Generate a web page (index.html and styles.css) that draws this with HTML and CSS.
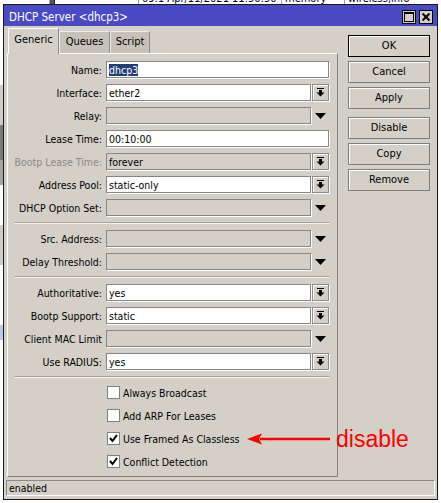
FILE: index.html
```html
<!DOCTYPE html>
<html lang="en">
<head>
  <meta charset="UTF-8" />
  <title>DHCP Server &lt;dhcp3&gt;</title>
  <link rel="stylesheet" href="styles.css">
</head>
<body>
  <div class="desktop">
    <!-- window behind, only its edges show -->
    <div class="bg-log">
      <div class="bg-cell w50"></div>
      <div class="bg-cell w5 dark"></div>
      <div class="bg-cell w82"></div>
      <div class="bg-cell w143"><span>09:1 Apr/11/2021 11:50:50</span></div>
      <div class="bg-cell w64"><span>memory</span></div>
      <div class="bg-cell wrest"><span>wireless,info</span></div>
    </div>
    <div class="bg-left">
      <div class="band white h80"></div>
      <div class="band light h40"></div>
      <div class="band dark h35"></div>
      <div class="band mid h25"></div>
      <div class="band white h40"></div>
      <div class="band light h40"></div>
      <div class="band white h60"></div>
      <div class="band blue h15"></div>
    </div>

    <div class="window">
      <div class="titlebar">
        <span class="title">DHCP Server &lt;dhcp3&gt;</span>
        <span class="tb-btn">
          <svg width="10" height="10" viewBox="0 0 10 10"><rect x="0.5" y="0.5" width="9" height="9" fill="none" stroke="#000"/><rect x="0" y="0" width="10" height="2" fill="#000"/></svg>
        </span>
        <span class="tb-btn">
          <svg width="10" height="10" viewBox="0 0 10 10"><path d="M1.5 1.5 L8.5 8.5 M8.5 1.5 L1.5 8.5" stroke="#000" stroke-width="2"/></svg>
        </span>
      </div>

      <div class="window-body">
        <div class="tabs-area">
          <div class="tabs">
            <div class="tab active">Generic</div>
            <div class="tab">Queues</div>
            <div class="tab">Script</div>
          </div>
          <div class="panel">
            <div class="row">
              <span class="lbl">Name:</span>
              <div class="field full"><span class="selected">dhcp3</span></div>
            </div>
            <div class="row">
              <span class="lbl">Interface:</span>
              <div class="field">ether2</div>
              <span class="dd-btn"><svg width="9" height="9" viewBox="0 0 9 9"><rect x="1" y="0" width="7" height="1" fill="#000"/><rect x="3" y="2" width="3" height="3" fill="#000"/><path d="M0.5 4.5 H8.5 L4.5 8.5 Z" fill="#000"/></svg></span>
            </div>
            <div class="row">
              <span class="lbl">Relay:</span>
              <div class="field off"></div>
              <span class="dd-arrow"><svg width="11" height="6" viewBox="0 0 11 6"><path d="M0 0 H11 L5.5 6 Z" fill="#000"/></svg></span>
            </div>
            <div class="row">
              <span class="lbl">Lease Time:</span>
              <div class="field full">00:10:00</div>
            </div>
            <div class="row">
              <span class="lbl muted">Bootp Lease Time:</span>
              <div class="field off">forever</div>
              <span class="dd-btn"><svg width="9" height="9" viewBox="0 0 9 9"><rect x="1" y="0" width="7" height="1" fill="#000"/><rect x="3" y="2" width="3" height="3" fill="#000"/><path d="M0.5 4.5 H8.5 L4.5 8.5 Z" fill="#000"/></svg></span>
            </div>
            <div class="row">
              <span class="lbl">Address Pool:</span>
              <div class="field">static-only</div>
              <span class="dd-btn"><svg width="9" height="9" viewBox="0 0 9 9"><rect x="1" y="0" width="7" height="1" fill="#000"/><rect x="3" y="2" width="3" height="3" fill="#000"/><path d="M0.5 4.5 H8.5 L4.5 8.5 Z" fill="#000"/></svg></span>
            </div>
            <div class="row">
              <span class="lbl">DHCP Option Set:</span>
              <div class="field off"></div>
              <span class="dd-arrow"><svg width="11" height="6" viewBox="0 0 11 6"><path d="M0 0 H11 L5.5 6 Z" fill="#000"/></svg></span>
            </div>

            <div class="sep"></div>

            <div class="row">
              <span class="lbl">Src. Address:</span>
              <div class="field off"></div>
              <span class="dd-arrow"><svg width="11" height="6" viewBox="0 0 11 6"><path d="M0 0 H11 L5.5 6 Z" fill="#000"/></svg></span>
            </div>
            <div class="row">
              <span class="lbl">Delay Threshold:</span>
              <div class="field off"></div>
              <span class="dd-arrow"><svg width="11" height="6" viewBox="0 0 11 6"><path d="M0 0 H11 L5.5 6 Z" fill="#000"/></svg></span>
            </div>

            <div class="sep"></div>

            <div class="row">
              <span class="lbl">Authoritative:</span>
              <div class="field">yes</div>
              <span class="dd-btn"><svg width="9" height="9" viewBox="0 0 9 9"><rect x="1" y="0" width="7" height="1" fill="#000"/><rect x="3" y="2" width="3" height="3" fill="#000"/><path d="M0.5 4.5 H8.5 L4.5 8.5 Z" fill="#000"/></svg></span>
            </div>
            <div class="row">
              <span class="lbl">Bootp Support:</span>
              <div class="field">static</div>
              <span class="dd-btn"><svg width="9" height="9" viewBox="0 0 9 9"><rect x="1" y="0" width="7" height="1" fill="#000"/><rect x="3" y="2" width="3" height="3" fill="#000"/><path d="M0.5 4.5 H8.5 L4.5 8.5 Z" fill="#000"/></svg></span>
            </div>
            <div class="row">
              <span class="lbl">Client MAC Limit</span>
              <div class="field off"></div>
              <span class="dd-arrow"><svg width="11" height="6" viewBox="0 0 11 6"><path d="M0 0 H11 L5.5 6 Z" fill="#000"/></svg></span>
            </div>
            <div class="row">
              <span class="lbl">Use RADIUS:</span>
              <div class="field">yes</div>
              <span class="dd-btn"><svg width="9" height="9" viewBox="0 0 9 9"><rect x="1" y="0" width="7" height="1" fill="#000"/><rect x="3" y="2" width="3" height="3" fill="#000"/><path d="M0.5 4.5 H8.5 L4.5 8.5 Z" fill="#000"/></svg></span>
            </div>

            <div class="sep"></div>

            <div class="row check-row">
              <span class="box"></span>
              <span>Always Broadcast</span>
            </div>
            <div class="row check-row">
              <span class="box"></span>
              <span>Add ARP For Leases</span>
            </div>
            <div class="row check-row">
              <span class="box"><svg width="11" height="11" viewBox="0 0 11 11"><path d="M2 5 L4.5 8 L9 2" fill="none" stroke="#000" stroke-width="2"/></svg></span>
              <span>Use Framed As Classless</span>
            </div>
            <div class="row check-row">
              <span class="box"><svg width="11" height="11" viewBox="0 0 11 11"><path d="M2 5 L4.5 8 L9 2" fill="none" stroke="#000" stroke-width="2"/></svg></span>
              <span>Conflict Detection</span>
            </div>
          </div>
        </div>

        <div class="buttons">
          <div class="btn default">OK</div>
          <div class="btn">Cancel</div>
          <div class="btn">Apply</div>
          <div class="btn spaced">Disable</div>
          <div class="btn">Copy</div>
          <div class="btn">Remove</div>
        </div>
      </div>

      <div class="statusbar">enabled</div>
    </div>

    <!-- red annotation drawn over the screenshot -->
    <div class="note">
      <svg class="note-arrow" width="86" height="14" viewBox="0 0 86 14"><path d="M14 7 H84" stroke="#f00" stroke-width="2.5"/><path d="M1 7 L16 1.5 L13 7 L16 12.5 Z" fill="#f00"/></svg>
      <span class="note-text">disable</span>
    </div>
  </div>
</body>
</html>
```
FILE: styles.css
```css
* {
  margin: 0;
  padding: 0;
  box-sizing: border-box;
}

body {
  width: 441px;
  height: 503px;
  overflow: hidden;
  background: #fff;
  font-family: "DejaVu Sans Condensed", "DejaVu Sans", sans-serif;
  font-stretch: condensed;
  font-size: 10.5px;
  color: #000;
}

.desktop {
  position: relative;
  width: 441px;
  height: 503px;
  background: #fff;
}

/* background window */
.bg-log {
  position: absolute;
  left: 0;
  top: 0;
  width: 441px;
  height: 5px;
  display: flex;
  overflow: hidden;
  background: #fff;
}

.bg-cell {
  height: 5px;
  border-right: 1px solid #a0a0a0;
  overflow: hidden;
  font-family: "DejaVu Sans", sans-serif;
  font-size: 11px;
}

.bg-cell span {
  display: block;
  margin-top: -8px;
  padding-left: 3px;
  white-space: nowrap;
}

.bg-cell.dark { background: #555; border-right-color: #222; }
.w50 { width: 50px; }
.w5 { width: 5px; }
.w82 { width: 84px; background: #fff; }
.w143 { width: 143px; }
.w64 { width: 63px; }
.wrest { flex: 1; border-right: none; }

.bg-left {
  position: absolute;
  left: 0;
  top: 5px;
  width: 3px;
  display: flex;
  flex-direction: column;
}

.band { width: 3px; }
.band.white { background: #fff; }
.band.light { background: #cfccc6; }
.band.dark { background: #7a7a7a; }
.band.mid { background: #a8a6a0; }
.band.blue { background: #b8cde8; }
.h15 { height: 15px; }
.h25 { height: 25px; }
.h35 { height: 35px; }
.h40 { height: 40px; }
.h60 { height: 60px; }
.h80 { height: 80px; }

/* dialog window */
.window {
  position: absolute;
  left: 3px;
  top: 4px;
  width: 435px;
  height: 496px;
  border: 1px solid #1a1a1a;
  background: #d4d0c8;
  display: flex;
  flex-direction: column;
}

.titlebar {
  height: 21px;
  background: #4a4ac6;
  display: flex;
  align-items: center;
  padding: 2px 4px 0 5px;
  gap: 3px;
}

.title {
  flex: 1;
  color: #fff;
  font-size: 11.5px;
  white-space: nowrap;
}

.tb-btn {
  width: 14px;
  height: 14px;
  background: #d4d0c8;
  border: 1px solid #000;
  display: flex;
  align-items: center;
  justify-content: center;
}

.window-body {
  height: 451px;
  display: flex;
  padding: 2px 0 0 3px;
}

.tabs-area {
  width: 331px;
  display: flex;
  flex-direction: column;
}

.tabs {
  display: flex;
  align-items: flex-end;
  height: 25px;
  padding-left: 1px;
}

.tab {
  height: 22px;
  padding: 3px 0 0;
  text-align: center;
  background: #c6c2ba;
  border-top: 1px solid #eeece8;
  border-left: 1px solid #eeece8;
  border-right: 1px solid #8c8a84;
  font-size: 11px;
}

.tab:nth-child(1) { width: 51px; }
.tab:nth-child(2) { width: 51px; }
.tab:nth-child(3) { width: 40px; }

.tab.active {
  height: 26px;
  margin-bottom: -1px;
  padding-top: 4px;
  background: #d4d0c8;
  border-top-color: #fff;
  border-left-color: #fff;
  position: relative;
  z-index: 1;
}

.panel {
  height: 424px;
  border-top: 1px solid #fff;
  border-left: 1px solid #fff;
  border-right: 1px solid #808080;
  border-bottom: 1px solid #808080;
  padding-top: 7px;
  display: flex;
  flex-direction: column;
  gap: 6px;
}

.row {
  height: 17px;
  display: flex;
  align-items: center;
}

.lbl {
  width: 95px;
  padding-right: 1px;
  text-align: right;
  white-space: nowrap;
  margin-right: 3px;
}

.lbl.muted { color: #8e8a84; }

.field {
  width: 205px;
  height: 17px;
  padding: 1px 2px 0;
  background: #fff;
  border: 1px solid #868686;
  box-shadow: 1px 1px 0 #fff;
  line-height: 14px;
  white-space: nowrap;
}

.field.full { width: 223px; }
.field.off { background: #d4d0c8; }

.selected {
  background: #233d78;
  color: #fff;
}

.dd-btn {
  width: 17px;
  height: 17px;
  margin-left: 1px;
  border: 1px solid #8a8a8a;
  box-shadow: inset 1px 1px 0 #fff, 1px 1px 0 #fff;
  display: flex;
  align-items: center;
  justify-content: center;
}

.dd-arrow {
  width: 17px;
  margin-left: 1px;
  display: flex;
  justify-content: center;
  padding-top: 1px;
}

.sep {
  height: 2px;
  margin: 0 7px 0 6px;
  border-top: 1px solid #a6a39d;
  border-bottom: 1px solid #f4f3f1;
}

.check-row {
  padding-left: 99px;
  gap: 3px;
}

.box {
  width: 13px;
  height: 13px;
  background: #fff;
  border: 1px solid #808080;
  display: flex;
  align-items: center;
  justify-content: center;
}

.buttons {
  width: 82px;
  margin: 7px 0 0 10px;
  display: flex;
  flex-direction: column;
  gap: 4px;
}

.btn {
  height: 22px;
  border: 1px solid #7c7c7c;
  box-shadow: inset 1px 1px 0 #fff;
  text-align: center;
  line-height: 19px;
  font-size: 11px;
}

.btn.default {
  border-color: #000;
}

.btn.spaced {
  margin-top: 4px;
}

.statusbar {
  height: 16px;
  margin: 3px 2px 0;
  padding: 1px 2px 0;
  border-top: 1px solid #8a8a8a;
  border-left: 1px solid #8a8a8a;
  border-bottom: 1px solid #fff;
  border-right: 1px solid #fff;
  line-height: 13px;
}

/* annotation */
.note {
  position: absolute;
  left: 246px;
  top: 426px;
  display: flex;
  align-items: center;
  gap: 4px;
}

.note-text {
  color: #f00;
  font-family: "Liberation Sans", sans-serif;
  font-stretch: normal;
  font-size: 23px;
  line-height: 26px;
}
```
